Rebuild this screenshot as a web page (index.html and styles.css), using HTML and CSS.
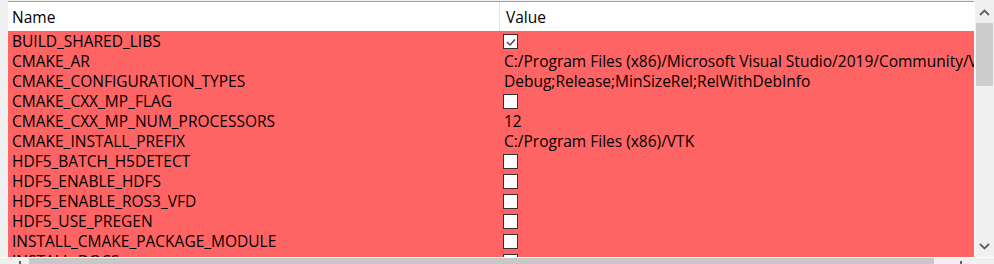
FILE: index.html
```html
<!DOCTYPE html>
<html lang="en">
<head>
  <meta charset="UTF-8">
  <title>CMake Cache</title>
  <link rel="stylesheet" href="styles.css">
</head>
<body>

  <div class="frame">
    <div class="view">
      <!-- Column headers -->
      <div class="header">
        <div class="col-name">Name</div>
        <div class="col-value">Value</div>
      </div>

      <div id="cache-list" class="rows">
        <div class="row"><div class="col-name">BUILD_SHARED_LIBS</div><div class="col-value"><span class="check on"><svg width="14" height="14" viewBox="0 0 14 14"><polyline points="3,7 6,10 11,4.5" fill="none" stroke="#444" stroke-width="1.4"/></svg></span></div></div>
        <div class="row"><div class="col-name">CMAKE_AR</div><div class="col-value">C:/Program Files (x86)/Microsoft Visual Studio/2019/Community/VC/Tools/MSVC/14.29.30133/bin/Hostx64/x64/lib.exe</div></div>
        <div class="row"><div class="col-name">CMAKE_CONFIGURATION_TYPES</div><div class="col-value">Debug;Release;MinSizeRel;RelWithDebInfo</div></div>
        <div class="row"><div class="col-name">CMAKE_CXX_MP_FLAG</div><div class="col-value"><span class="check"></span></div></div>
        <div class="row"><div class="col-name">CMAKE_CXX_MP_NUM_PROCESSORS</div><div class="col-value">12</div></div>
        <div class="row"><div class="col-name">CMAKE_INSTALL_PREFIX</div><div class="col-value">C:/Program Files (x86)/VTK</div></div>
        <div class="row"><div class="col-name">HDF5_BATCH_H5DETECT</div><div class="col-value"><span class="check"></span></div></div>
        <div class="row"><div class="col-name">HDF5_ENABLE_HDFS</div><div class="col-value"><span class="check"></span></div></div>
        <div class="row"><div class="col-name">HDF5_ENABLE_ROS3_VFD</div><div class="col-value"><span class="check"></span></div></div>
        <div class="row"><div class="col-name">HDF5_USE_PREGEN</div><div class="col-value"><span class="check"></span></div></div>
        <div class="row"><div class="col-name">INSTALL_CMAKE_PACKAGE_MODULE</div><div class="col-value"><span class="check"></span></div></div>
        <div class="row"><div class="col-name">INSTALL_DOCS</div><div class="col-value"><span class="check"></span></div></div>
      </div>
    </div>

    <!-- vertical scrollbar -->
    <div class="vscroll">
      <div class="arrow"><svg width="11" height="7" viewBox="0 0 11 7"><polyline points="1,6 5.5,1.5 10,6" fill="none" stroke="#606060" stroke-width="1.8"/></svg></div>
      <div class="vthumb"></div>
      <div class="vtrack"></div>
      <div class="arrow"><svg width="11" height="7" viewBox="0 0 11 7"><polyline points="1,1 5.5,5.5 10,1" fill="none" stroke="#606060" stroke-width="1.8"/></svg></div>
    </div>
  </div>

  <!-- horizontal scrollbar (cut off at the bottom) -->
  <div class="hscroll">
    <div class="harrow"><span class="tip"></span></div>
    <div class="hthumb"></div>
    <div class="harrow right"><span class="tip"></span></div>
    <div class="corner"></div>
  </div>

</body>
</html>
```

FILE: styles.css
```css
body {
  margin: 0;
  background: #f0f0f0;
  font-family: "Open Sans", "Noto Sans", Arial, sans-serif;
  font-size: 15.5px;
  color: #000;
  overflow: hidden;
}

.frame {
  display: flex;
  height: 257px;
  padding-left: 8px;
}

.view {
  flex: 1;
  min-width: 0;
  border-top: 1px solid #a0a0a0;
  margin-top: 1px;
  background: white;
  overflow: hidden;
  display: flex;
  flex-direction: column;
}

.header {
  display: flex;
  height: 29px;
  align-items: center;
  flex-shrink: 0;
}
.header .col-name {
  padding-left: 4px;
  border-right: 1px solid #e5e5e5;
  height: 100%;
  display: flex;
  align-items: center;
}
.header .col-value {
  padding-left: 6px;
}

.col-name {
  width: 492px;
  box-sizing: border-box;
  padding-left: 4px;
  flex-shrink: 0;
}
.col-value {
  flex: 1;
  min-width: 0;
  padding-left: 4px;
  white-space: nowrap;
  overflow: hidden;
  display: flex;
  align-items: center;
}

.rows {
  background: #ff6464;
  flex: 1;
  overflow: hidden;
}
.row {
  display: flex;
  height: 20px;
  line-height: 20px;
  align-items: center;
  white-space: nowrap;
}
.row .col-name {
  padding-left: 4px;
}

.check {
  display: inline-block;
  width: 15px;
  height: 15px;
  box-sizing: border-box;
  border: 1px solid #333;
  background: white;
  margin-left: -1px;
  position: relative;
}
.check svg {
  position: absolute;
  left: 0;
  top: 0;
}

/* scrollbars */
.vscroll {
  width: 19px;
  margin-top: 2px;
  display: flex;
  flex-direction: column;
  background: #f0f0f0;
  border-left: 1px solid white;
}
.arrow {
  height: 21px;
  display: flex;
  align-items: center;
  justify-content: center;
}
.vthumb {
  height: 63px;
  margin: 0 1px;
  background: #cdcdcd;
}
.vtrack {
  flex: 1;
}

.hscroll {
  display: flex;
  height: 7px;
  border-top: 1px solid white;
  box-sizing: border-box;
}
.harrow {
  width: 29px;
  position: relative;
  background: #f0f0f0;
}
.harrow .tip {
  position: absolute;
  left: 19px;
  top: 3px;
  width: 2px;
  height: 3px;
  background: #606060;
}
.harrow.right {
  width: 41px;
}
.harrow.right .tip {
  left: 26px;
}
.hthumb {
  width: 905px;
  background: #c8c8c8;
}
.corner {
  flex: 1;
  background: #f0f0f0;
}
```
